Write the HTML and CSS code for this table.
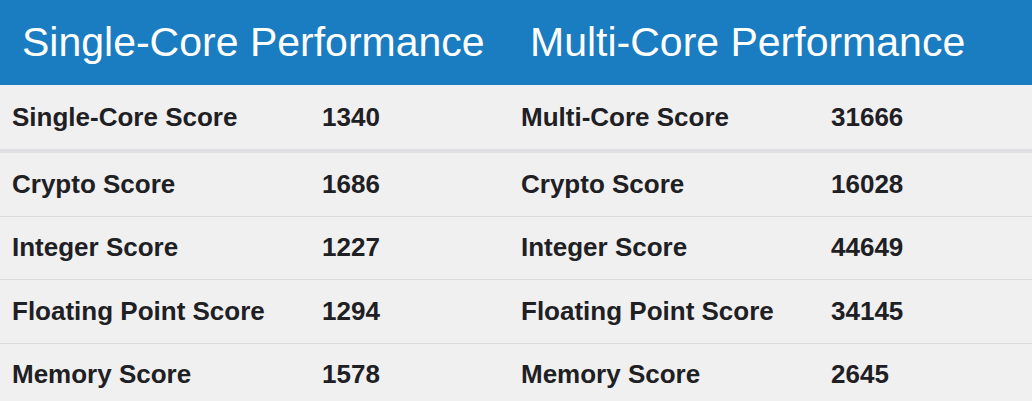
FILE: index.html
```html
<!DOCTYPE html>
<html>
<head>
<meta charset="utf-8">
<link rel="stylesheet" href="styles.css">
</head>
<body>
<div class="panels">
  <section class="panel">
    <h2 class="panel-title">Single-Core Performance</h2>
    <div class="row row-main"><span class="label">Single-Core Score</span><span class="value">1340</span></div>
    <div class="row"><span class="label">Crypto Score</span><span class="value">1686</span></div>
    <div class="row"><span class="label">Integer Score</span><span class="value">1227</span></div>
    <div class="row"><span class="label">Floating Point Score</span><span class="value">1294</span></div>
    <div class="row"><span class="label">Memory Score</span><span class="value">1578</span></div>
  </section>
  <section class="panel panel-right">
    <h2 class="panel-title">Multi-Core Performance</h2>
    <div class="row row-main"><span class="label">Multi-Core Score</span><span class="value">31666</span></div>
    <div class="row"><span class="label">Crypto Score</span><span class="value">16028</span></div>
    <div class="row"><span class="label">Integer Score</span><span class="value">44649</span></div>
    <div class="row"><span class="label">Floating Point Score</span><span class="value">34145</span></div>
    <div class="row"><span class="label">Memory Score</span><span class="value">2645</span></div>
  </section>
</div>
</body>
</html>
```
FILE: styles.css
```css
* { box-sizing: border-box; }
html, body {
  margin: 0;
  padding: 0;
  background: #f0f0f0;
  font-family: "Liberation Sans", Arial, sans-serif;
  overflow: hidden;
}
.panels {
  display: grid;
  grid-template-columns: 509px 1fr;
  width: 1032px;
}
.panel {
  display: flex;
  flex-direction: column;
}
.panel-title {
  margin: 0;
  height: 85px;
  line-height: 84px;
  padding-left: 22px;
  background: #1a7cc1;
  color: #ffffff;
  font-size: 41px;
  font-weight: normal;
  white-space: nowrap;
  border-bottom: 1px solid #1a7cc1;
}
.panel-right .panel-title { padding-left: 21px; }
.row {
  display: flex;
  align-items: center;
  height: 63.5px;
  padding-left: 12px;
  border-bottom: 1px solid #dcdcdc;
  font-size: 26px;
  font-weight: bold;
  color: #1f2024;
  white-space: nowrap;
}
.row-main {
  height: 68px;
  border-bottom: 4px solid #dfdfe4;
}
.label { width: 310px; }
```
